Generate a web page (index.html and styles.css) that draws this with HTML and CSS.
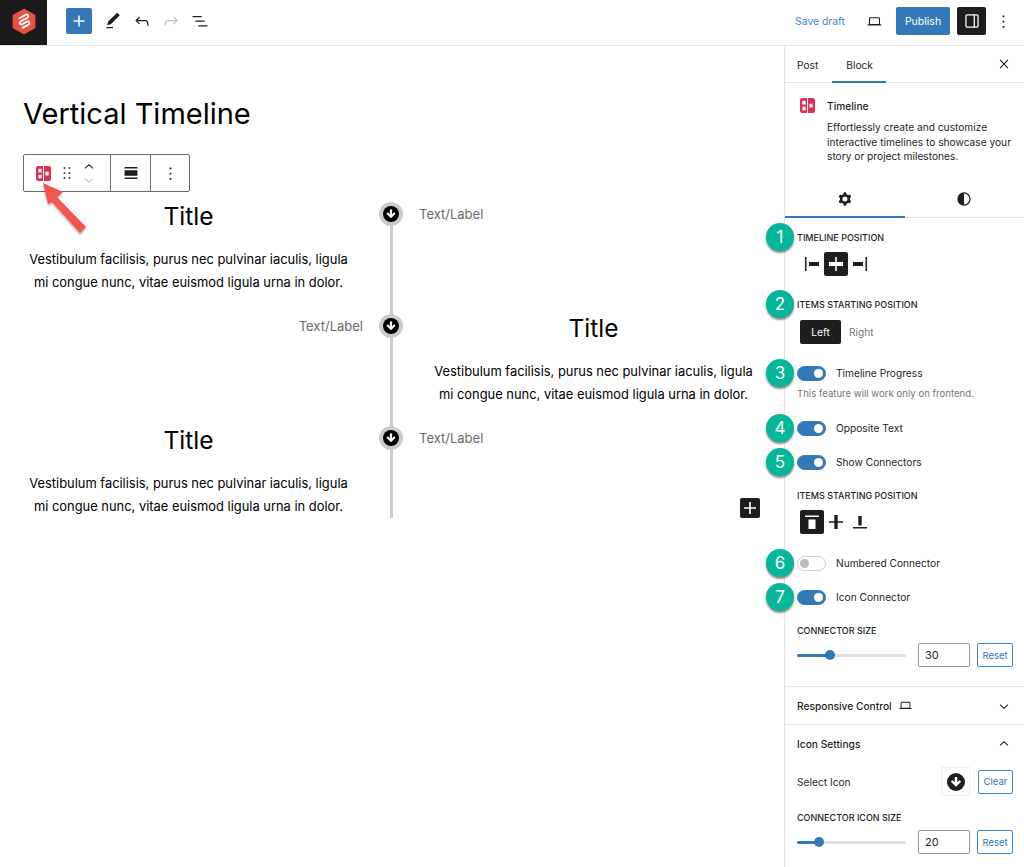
FILE: index.html
```html
<!DOCTYPE html>
<html lang="en">
<head>
  <meta charset="UTF-8">
  <meta name="viewport" content="width=device-width, initial-scale=1.0">
  <title>Vertical Timeline</title>
  <link rel="stylesheet" href="styles.css">
</head>
<body>
  <svg class="sprite" aria-hidden="true">
    <symbol id="i-plus" viewBox="0 0 24 24"><path d="M18 11.2h-5.2V6h-1.6v5.2H6v1.6h5.2V18h1.6v-5.2H18z"/></symbol>
    <symbol id="i-pencil" viewBox="0 0 24 24"><path d="M20.1 5.1L16.9 2 6.2 12.7l-1.3 4.4 4.5-1.3L20.1 5.1zM4 20.8h8v-1.5H4v1.5z"/></symbol>
    <symbol id="i-undo" viewBox="0 0 24 24"><path d="M18.3 11.7c-.6-.6-1.4-.9-2.3-.9H6.7l2.9-3.3-1.1-1-4.5 5L8.5 16l1-1-2.7-2.7H16c.5 0 .9.2 1.3.5 1 1 1 3.4 1 4.5v.3h1.5v-.2c0-1.5 0-4.3-1.5-5.7z"/></symbol>
    <symbol id="i-redo" viewBox="0 0 24 24"><path d="M15.6 6.5l-1.1 1 2.9 3.3H8c-.9 0-1.7.3-2.3.9-1.4 1.5-1.4 4.2-1.4 5.6v.2h1.5v-.3c0-1.1 0-3.5 1-4.5.3-.3.7-.5 1.3-.5h9.2L14.5 15l1.1 1.1 4.6-4.6-4.6-5z"/></symbol>
    <symbol id="i-list" viewBox="0 0 24 24"><path d="M3 6h11v1.5H3V6zm3.5 5.5h11V13h-11v-1.5zM21 17H10v1.5h11V17z"/></symbol>
    <symbol id="i-laptop" viewBox="0 0 24 24"><path d="M20.5 16h-.7V8c0-1.1-.9-2-2-2H6.2c-1.1 0-2 .9-2 2v8h-.7c-.8 0-1.5.7-1.5 1.5h20c0-.8-.7-1.5-1.5-1.5zM5.7 8c0-.3.2-.5.5-.5h11.6c.3 0 .5.2.5.5v7.6H5.7V8z"/></symbol>
    <symbol id="i-sidebar" viewBox="0 0 24 24"><path d="M18 4H6c-1.1 0-2 .9-2 2v12c0 1.1.9 2 2 2h12c1.1 0 2-.9 2-2V6c0-1.1-.9-2-2-2zm-4 14.5H6c-.3 0-.5-.2-.5-.5V6c0-.3.2-.5.5-.5h8v13zm4.5-.5c0 .3-.2.5-.5.5h-2.5v-13H18c.3 0 .5.2.5.5v12z"/></symbol>
    <symbol id="i-more" viewBox="0 0 24 24"><path d="M13 19h-2v-2h2v2zm0-6h-2v-2h2v2zm0-6h-2V5h2v2z"/></symbol>
    <symbol id="i-close" viewBox="0 0 24 24"><path d="M13.300 12l6.100-6.300-1.400-1.300-6 6.200-6-6.200-1.400 1.300 6.100 6.300-6.100 6.300 1.400 1.300 6-6.200 6 6.200 1.400-1.300z"/></symbol>
    <symbol id="i-gear" viewBox="0 0 24 24"><path fill-rule="evenodd" d="M10.289 4.836A1 1 0 0 1 11.275 4h1.306a1 1 0 0 1 .987.836l.244 1.466c.787.26 1.503.679 2.108 1.218l1.393-.522a1 1 0 0 1 1.216.437l.653 1.13a1 1 0 0 1-.23 1.273l-1.148.944a6.025 6.025 0 0 1 0 2.435l1.149.946a1 1 0 0 1 .23 1.272l-.653 1.13a1 1 0 0 1-1.216.437l-1.394-.522c-.605.54-1.32.958-2.108 1.218l-.244 1.466a1 1 0 0 1-.987.836h-1.306a1 1 0 0 1-.986-.836l-.244-1.466a5.995 5.995 0 0 1-2.108-1.218l-1.394.522a1 1 0 0 1-1.217-.436l-.653-1.131a1 1 0 0 1 .23-1.272l1.149-.946a6.026 6.026 0 0 1 0-2.435l-1.148-.944a1 1 0 0 1-.23-1.272l.653-1.131a1 1 0 0 1 1.217-.437l1.393.522a5.994 5.994 0 0 1 2.108-1.218l.244-1.466ZM14.929 12a3 3 0 1 1-6 0 3 3 0 0 1 6 0Z"/></symbol>
    <symbol id="i-contrast" viewBox="0 0 24 24"><path fill-rule="evenodd" d="M12 4a8 8 0 1 0 0 16 8 8 0 0 0 0-16zm0 1.500a6.500 6.500 0 0 1 0 13z"/></symbol>
    <symbol id="i-chev-down" viewBox="0 0 24 24"><path d="M17.500 9.500L12 14.400 6.500 9.500l-1 1.100L12 16.500l6.500-5.900z"/></symbol>
    <symbol id="i-chev-up" viewBox="0 0 24 24"><path d="M6.500 14.500L12 9.600l5.500 4.900 1-1.100L12 7.500l-6.500 5.900z"/></symbol>
    <symbol id="i-drag" viewBox="0 0 24 24"><path d="M8 7h2V5H8v2zm0 6h2v-2H8v2zm0 6h2v-2H8v2zm6-14v2h2V5h-2zm0 8h2v-2h-2v2zm0 6h2v-2h-2v2z"/></symbol>
    <symbol id="i-align" viewBox="0 0 24 24"><path d="M5 5.500h14V7H5zM5 9h14v6H5zM5 17h14v1.500H5z"/></symbol>
    <symbol id="i-pos-left" viewBox="0 0 24 24"><path d="M5 5h1.500v14H5zM9 10h10v4H9z"/></symbol>
    <symbol id="i-pos-center" viewBox="0 0 24 24"><path d="M11.200 5h1.600v5H19v4h-6.200v5h-1.600v-5H5v-4h6.200z"/></symbol>
    <symbol id="i-pos-right" viewBox="0 0 24 24"><path d="M17.500 5H19v14h-1.500zM5 10h10v4H5z"/></symbol>
    <symbol id="i-item-top" viewBox="0 0 24 24"><path d="M5 5.500h14V7H5zM8.500 9.500h7V19h-7z"/></symbol>
    <symbol id="i-item-mid" viewBox="0 0 24 24"><path d="M10.300 5h3.400v6.200H19v1.600h-5.300V19h-3.400v-6.200H5v-1.600h5.300z"/></symbol>
    <symbol id="i-item-bot" viewBox="0 0 24 24"><path d="M10.300 6h3.400v9.500h-3.400zM5 17h14v1.500H5z"/></symbol>
    <symbol id="i-timeline" viewBox="0 0 16 16"><rect width="16" height="16" rx="2.500" fill="#dd2f52"/><path fill="#fff" d="M7.500 0h1v16h-1zM2.500 3h3.500v3.800H2.500zM2.500 9.200h3.500V13H2.500zM10 6h3.500v4H10z"/></symbol>
    <symbol id="i-arrow-circle" viewBox="0 0 20 20"><circle cx="10" cy="10" r="10"/><path fill="#fff" d="M8.600 4.500h2.800v5.700l2.500-2.300 1.800 1.900L10 15.200 4.300 9.800l1.800-1.900 2.500 2.300z"/></symbol>
  </svg>

  <header class="topbar">
    <div class="logo">
      <svg viewBox="0 0 28 30" width="26" height="29">
        <path fill="#e8503f" stroke="#e8503f" stroke-width="1.500" stroke-linejoin="round" d="M14 2l11.500 6.500v13L14 28 2.500 21.500v-13z"/>
        <path fill="none" stroke="#fff" stroke-width="2" stroke-linecap="round" stroke-linejoin="round" d="M9 11.500l7-3.800c2.400-1 3.800 2 1.600 3.300l-7.200 4c-2.200 1.300-.8 4 1.500 3l5.500-3c2.400-1 3.600 2 1.400 3.300l-6.300 3.500"/>
      </svg>
    </div>
    <div class="tools">
      <button class="btn-add"><svg class="ico"><use href="#i-plus"/></svg></button>
      <svg class="ico"><use href="#i-pencil"/></svg>
      <svg class="ico"><use href="#i-undo"/></svg>
      <svg class="ico is-disabled"><use href="#i-redo"/></svg>
      <svg class="ico"><use href="#i-list"/></svg>
    </div>
    <div class="actions">
      <span class="save-draft">Save draft</span>
      <svg class="ico laptop"><use href="#i-laptop"/></svg>
      <button class="btn-publish">Publish</button>
      <button class="btn-sidebar"><svg class="ico"><use href="#i-sidebar"/></svg></button>
      <svg class="ico more"><use href="#i-more"/></svg>
    </div>
  </header>

  <div class="workspace">
    <main class="editor">
      <h1 class="post-title">Vertical Timeline</h1>

      <div class="block-toolbar">
        <div class="tb-group tb-main">
          <svg class="tb-block"><use href="#i-timeline"/></svg>
          <svg class="ico tb-drag"><use href="#i-drag"/></svg>
          <div class="tb-mover">
            <svg class="ico"><use href="#i-chev-up"/></svg>
            <svg class="ico is-disabled"><use href="#i-chev-down"/></svg>
          </div>
        </div>
        <div class="tb-group tb-align"><svg class="ico"><use href="#i-align"/></svg></div>
        <div class="tb-group tb-more"><svg class="ico"><use href="#i-more"/></svg></div>
      </div>

      <svg class="pointer" width="56" height="62" viewBox="0 0 56 62">
        <path fill="#f6544f" d="M5 5l20 9-6 5 29 30-6 6-28-31-4 2z"/>
      </svg>

      <div class="timeline">
        <div class="tl-row">
          <div class="tl-cell tl-content is-left">
            <h2>Title</h2>
            <p>Vestibulum facilisis, purus nec pulvinar iaculis, ligula mi congue nunc, vitae euismod ligula urna in dolor.</p>
          </div>
          <div class="tl-axis"><span class="tl-dot"><svg><use href="#i-arrow-circle"/></svg></span></div>
          <div class="tl-cell tl-label">Text/Label</div>
        </div>
        <div class="tl-row">
          <div class="tl-cell tl-label is-end">Text/Label</div>
          <div class="tl-axis"><span class="tl-dot"><svg><use href="#i-arrow-circle"/></svg></span></div>
          <div class="tl-cell tl-content is-right">
            <h2>Title</h2>
            <p>Vestibulum facilisis, purus nec pulvinar iaculis, ligula mi congue nunc, vitae euismod ligula urna in dolor.</p>
          </div>
        </div>
        <div class="tl-row is-last">
          <div class="tl-cell tl-content is-left">
            <h2>Title</h2>
            <p>Vestibulum facilisis, purus nec pulvinar iaculis, ligula mi congue nunc, vitae euismod ligula urna in dolor.</p>
          </div>
          <div class="tl-axis"><span class="tl-dot"><svg><use href="#i-arrow-circle"/></svg></span></div>
          <div class="tl-cell tl-label">Text/Label</div>
          <button class="btn-append"><svg class="ico"><use href="#i-plus"/></svg></button>
        </div>
      </div>
    </main>

    <aside class="sidebar">
      <div class="side-tabs">
        <span class="side-tab">Post</span>
        <span class="side-tab is-active">Block</span>
        <svg class="ico side-close"><use href="#i-close"/></svg>
      </div>

      <div class="block-card">
        <svg class="card-icon"><use href="#i-timeline"/></svg>
        <div>
          <div class="card-title">Timeline</div>
          <p class="card-desc">Effortlessly create and customize interactive timelines to showcase your story or project milestones.</p>
        </div>
      </div>

      <div class="style-tabs">
        <div class="style-tab is-active"><svg class="ico"><use href="#i-gear"/></svg></div>
        <div class="style-tab"><svg class="ico"><use href="#i-contrast"/></svg></div>
      </div>

      <section class="panel">
        <div class="ctl-label with-badge"><span class="badge">1</span>Timeline Position</div>
        <div class="icon-group mt-8">
          <span class="icon-opt"><svg class="ico"><use href="#i-pos-left"/></svg></span>
          <span class="icon-opt is-on"><svg class="ico"><use href="#i-pos-center"/></svg></span>
          <span class="icon-opt"><svg class="ico"><use href="#i-pos-right"/></svg></span>
        </div>

        <div class="ctl-label with-badge mt-21"><span class="badge">2</span>Items Starting Position</div>
        <div class="segmented mt-9">
          <span class="seg is-on">Left</span>
          <span class="seg">Right</span>
        </div>

        <label class="toggle-row mt-19"><span class="badge">3</span><span class="toggle is-on"></span>Timeline Progress</label>
        <p class="help mt-4">This feature will work only on frontend.</p>

        <label class="toggle-row mt-17"><span class="badge">4</span><span class="toggle is-on"></span>Opposite Text</label>
        <label class="toggle-row mt-14"><span class="badge">5</span><span class="toggle is-on"></span>Show Connectors</label>

        <div class="ctl-label mt-16">Items Starting Position</div>
        <div class="icon-group mt-8">
          <span class="icon-opt is-on"><svg class="ico"><use href="#i-item-top"/></svg></span>
          <span class="icon-opt"><svg class="ico"><use href="#i-item-mid"/></svg></span>
          <span class="icon-opt"><svg class="ico"><use href="#i-item-bot"/></svg></span>
        </div>

        <label class="toggle-row mt-19"><span class="badge">6</span><span class="toggle"></span>Numbered Connector</label>
        <label class="toggle-row mt-14"><span class="badge">7</span><span class="toggle is-on"></span>Icon Connector</label>

        <div class="ctl-label mt-16">Connector Size</div>
        <div class="range-row mt-6">
          <div class="range"><div class="range-fill" style="width: 30%"></div></div>
          <span class="num-input">30</span>
          <button class="btn-outline btn-reset">Reset</button>
        </div>
      </section>

      <section class="accordion">
        <span>Responsive Control</span>
        <svg class="ico acc-device"><use href="#i-laptop"/></svg>
        <svg class="ico acc-chev"><use href="#i-chev-down"/></svg>
      </section>

      <section class="accordion is-open">
        <span>Icon Settings</span>
        <svg class="ico acc-chev"><use href="#i-chev-up"/></svg>
      </section>
      <div class="panel panel-open">
        <div class="select-icon">
          <span class="select-label">Select Icon</span>
          <span class="icon-preview"><svg><use href="#i-arrow-circle"/></svg></span>
          <button class="btn-outline btn-clear">Clear</button>
        </div>
        <div class="ctl-label mt-14">Connector Icon Size</div>
        <div class="range-row mt-6">
          <div class="range"><div class="range-fill" style="width: 20%"></div></div>
          <span class="num-input">20</span>
          <button class="btn-outline btn-reset">Reset</button>
        </div>
      </div>
    </aside>
  </div>
</body>
</html>
```

FILE: styles.css
```css
* {
  box-sizing: border-box;
}

html,
body {
  height: 100%;
}

body {
  margin: 0;
  overflow: hidden;
  background-color: #fff;
  color: #1e1e1e;
  font-family: 'Inter', 'Liberation Sans', sans-serif;
  font-size: 10.200px;
}

button {
  border: none;
  padding: 0;
  font: inherit;
}

svg {
  display: block;
  fill: currentColor;
}

.sprite {
  display: none;
}

.ico {
  width: 24px;
  height: 24px;
  flex: none;
}

.is-disabled {
  color: #c4c4c4;
}

/* top bar */
.topbar {
  display: flex;
  align-items: center;
  height: 46px;
  padding-right: 8px;
  border-bottom: 1px solid #e4e4e4;
}

.logo {
  display: flex;
  align-items: center;
  justify-content: center;
  width: 47px;
  height: 45px;
  margin-right: 19px;
  padding-bottom: 3px;
  background-color: #1a1a1a;
}

.tools {
  display: flex;
  align-items: center;
  gap: 9px;
  padding-bottom: 3px;
}

.tools > .ico {
  width: 20px;
  height: 20px;
}

.btn-add {
  display: flex;
  align-items: center;
  justify-content: center;
  width: 26px;
  height: 26px;
  margin-right: 2px;
  border-radius: 2px;
  background-color: #3379b7;
  color: #fff;
}

.btn-add .ico {
  width: 22px;
  height: 22px;
}

.actions {
  display: flex;
  align-items: center;
  margin-left: auto;
  padding-bottom: 3px;
}

.save-draft {
  margin-right: 21px;
  color: #3f86c6;
  font-size: 10.400px;
}

.laptop {
  width: 17px;
  height: 17px;
  margin-right: 13px;
}

.btn-publish {
  width: 54px;
  height: 28px;
  margin-right: 7px;
  border-radius: 2px;
  background-color: #3379b7;
  color: #fff;
  font-size: 10.500px;
}

.btn-sidebar {
  display: flex;
  align-items: center;
  justify-content: center;
  width: 29px;
  height: 28px;
  border-radius: 2px;
  background-color: #1e1e1e;
  color: #fff;
}

.btn-sidebar .ico {
  width: 20px;
  height: 20px;
}

.more {
  width: 21px;
  height: 21px;
  margin: 0 2px 0 7px;
}

/* layout */
.workspace {
  display: flex;
  height: calc(100vh - 46px);
}

/* editor */
.editor {
  position: relative;
  width: 784px;
  flex: none;
  padding: 50px 24px 0 23px;
  color: #000;
}

.post-title {
  margin: 0;
  font-size: 29px;
  font-weight: 400;
  line-height: 36px;
}

.block-toolbar {
  display: inline-flex;
  height: 38px;
  margin-top: 22px;
  border: 1px solid #6b6b6b;
  border-radius: 2px;
  vertical-align: top;
  color: #1e1e1e;
}

.tb-group {
  display: flex;
  align-items: center;
  justify-content: center;
  border-right: 1px solid #6b6b6b;
}

.tb-group:last-child {
  border-right: none;
}

.tb-main {
  width: 87px;
  padding-left: 12px;
  justify-content: flex-start;
}

.tb-align {
  width: 40px;
}

.tb-align .ico {
  width: 22px;
  height: 22px;
}

.tb-more {
  width: 38px;
}

.tb-more .ico {
  width: 21px;
  height: 21px;
}

.tb-block {
  width: 15px;
  height: 15px;
  flex: none;
}

.tb-drag {
  width: 20px;
  height: 20px;
  margin-left: 6px;
}

.tb-mover {
  margin-left: 3px;
  display: flex;
  flex-direction: column;
}

.tb-mover .ico {
  width: 18px;
  height: 16px;
}

.tb-mover .ico:last-child {
  margin-top: -3px;
}

.pointer {
  position: absolute;
  left: 38px;
  top: 132px;
  z-index: 2;
  filter: drop-shadow(0 2px 1px rgba(0, 0, 0, 0.3));
}

/* timeline block */
.timeline {
  margin-top: 10px;
}

.tl-row {
  position: relative;
  display: grid;
  grid-template-columns: 340px 56px 1fr;
  height: 112px;
}

.tl-row.is-last {
  height: 92px;
}

.tl-content {
  text-align: center;
}

.tl-content.is-left {
  padding-right: 9px;
}

.tl-content.is-right {
  padding-left: 8px;
}

.tl-content h2 {
  margin: 0;
  font-size: 24.500px;
  font-weight: 400;
  line-height: 28px;
}

.tl-content p {
  margin: 18px 0 0;
  font-size: 12.900px;
  line-height: 23px;
}

.tl-label {
  color: #6a6a6a;
  font-size: 13px;
  line-height: 24px;
}

.tl-label.is-end {
  text-align: right;
}

.tl-axis {
  display: flex;
  justify-content: center;
  background: linear-gradient(#ccc, #ccc) center / 3px 100% no-repeat;
}

.tl-dot {
  display: flex;
  align-items: center;
  justify-content: center;
  width: 24px;
  height: 24px;
  border-radius: 50%;
  background-color: #ccc;
  color: #000;
}

.tl-dot svg {
  width: 16px;
  height: 16px;
}

.btn-append {
  position: absolute;
  right: 0;
  bottom: 0;
  display: flex;
  align-items: center;
  justify-content: center;
  width: 20px;
  height: 20px;
  border-radius: 2px;
  background-color: #1e1e1e;
  color: #fff;
}

/* sidebar */
.sidebar {
  position: relative;
  z-index: 3;
  width: 240px;
  flex: none;
  border-left: 1px solid #e4e4e4;
  background-color: #fff;
}

.side-tabs {
  display: flex;
  align-items: center;
  height: 37px;
  border-bottom: 1px solid #e4e4e4;
}

.side-tab {
  display: flex;
  align-items: center;
  height: 37px;
  padding: 0 14px 0 12px;
  margin-top: 1px;
}

.side-tab.is-active {
  width: 54px;
  padding: 0 14px;
  box-shadow: inset 0 -2px 0 #3379b7;
}

.side-close {
  width: 14px;
  height: 14px;
  margin-left: auto;
  margin-right: 13px;
}

.block-card {
  display: flex;
  gap: 12px;
  padding: 15px 10px 0 15px;
  height: 101px;
}

.card-icon {
  width: 15px;
  height: 15px;
  flex: none;
}

.card-title {
  padding-top: 1px;
  font-weight: 500;
  line-height: 15px;
}

.card-desc {
  margin: 6px 0 0;
  line-height: 14.600px;
}

.style-tabs {
  display: flex;
  height: 34px;
  border-bottom: 1px solid #e4e4e4;
}

.style-tab {
  display: flex;
  align-items: center;
  justify-content: center;
  width: 121px;
  padding-bottom: 5px;
  margin-bottom: -1px;
}

.style-tab .ico {
  width: 20px;
  height: 20px;
}

.style-tab.is-active {
  box-shadow: inset 0 -2px 0 #3379b7;
}

.panel {
  padding: 12px 11px 19px 12px;
  border-bottom: 1px solid #e8e8e8;
}

.panel-open {
  padding-top: 4px;
  border-bottom: none;
}

.mt-4 { margin-top: 4px; }
.mt-6 { margin-top: 6px; }
.mt-8 { margin-top: 8px; }
.mt-9 { margin-top: 9px; }
.mt-14 { margin-top: 14px; }
.mt-16 { margin-top: 16px; }
.mt-17 { margin-top: 17px; }
.mt-19 { margin-top: 19px; }
.mt-21 { margin-top: 21px; }

.ctl-label {
  height: 14px;
  padding-top: 1px;
  font-size: 9px;
  font-weight: 500;
  line-height: 14px;
  text-transform: uppercase;
}

.with-badge,
.toggle-row {
  position: relative;
}

.badge {
  position: absolute;
  left: -31px;
  top: 50%;
  width: 28px;
  height: 28px;
  margin-top: -14px;
  border-radius: 50%;
  background-color: #04b79b;
  box-shadow: 0 2px 2px rgba(0, 0, 0, 0.45);
  color: #fff;
  font-size: 17px;
  font-weight: 400;
  line-height: 28px;
  text-align: center;
  text-transform: none;
}

.icon-group {
  display: flex;
  padding-left: 3px;
}

.icon-opt {
  display: block;
  width: 24px;
  height: 24px;
  border-radius: 2px;
}

.icon-opt.is-on {
  background-color: #1e1e1e;
  color: #fff;
}

.segmented {
  display: flex;
  align-items: center;
  padding-left: 3px;
}

.seg {
  display: flex;
  align-items: center;
  justify-content: center;
  width: 41px;
  height: 24px;
  margin-right: 8px;
  color: #757575;
}

.seg.is-on {
  border-radius: 2px;
  background-color: #1e1e1e;
  color: #fff;
}

.seg:last-child {
  width: auto;
}

.toggle-row {
  display: flex;
  align-items: center;
  height: 20px;
}

.toggle {
  position: relative;
  width: 29px;
  height: 15px;
  margin-right: 10px;
  border: 1px solid #ccc;
  border-radius: 8px;
  background-color: #fff;
}

.toggle::after {
  content: "";
  position: absolute;
  left: 2px;
  top: 2px;
  width: 9px;
  height: 9px;
  border-radius: 50%;
  background-color: #bbb;
}

.toggle.is-on {
  border-color: #3379b7;
  background-color: #3379b7;
}

.toggle.is-on::after {
  left: auto;
  right: 2px;
  background-color: #fff;
}

.help {
  margin-bottom: 0;
  color: #757575;
  font-size: 9.600px;
  line-height: 14px;
}

.range-row {
  display: flex;
  align-items: center;
}

.range {
  width: 109px;
  height: 3px;
  margin-right: 12px;
  border-radius: 2px;
  background-color: #e0e0e0;
}

.range-fill {
  position: relative;
  height: 3px;
  border-radius: 2px;
  background-color: #3379b7;
}

.range-fill::after {
  content: "";
  position: absolute;
  right: -5px;
  top: -3.500px;
  width: 10px;
  height: 10px;
  border-radius: 50%;
  background-color: #3379b7;
}

.num-input {
  width: 52px;
  height: 24px;
  margin-right: 7px;
  padding-left: 6px;
  border: 1px solid #949494;
  border-radius: 2px;
  font-size: 11px;
  line-height: 22px;
}

.btn-outline {
  border: 1px solid #3f86c6;
  border-radius: 2px;
  background-color: #fff;
  color: #3379b7;
  font-size: 9.500px;
}

.btn-reset {
  width: 36px;
  height: 24px;
}

.accordion {
  display: flex;
  align-items: center;
  height: 38px;
  padding: 0 12px 0 12px;
  border-bottom: 1px solid #e8e8e8;
  font-weight: 500;
}

.accordion.is-open {
  border-bottom: none;
}

.acc-device {
  width: 15px;
  height: 15px;
  margin-left: 6px;
}

.acc-chev {
  width: 16px;
  height: 16px;
  margin-left: auto;
}

.select-icon {
  display: flex;
  align-items: center;
  height: 29px;
}

.select-label {
  margin-right: auto;
}

.icon-preview {
  display: flex;
  align-items: center;
  justify-content: center;
  width: 29px;
  height: 29px;
  margin-right: 8px;
  border: 1px solid #f0f0f0;
}

.icon-preview svg {
  width: 18px;
  height: 18px;
}

.btn-clear {
  width: 35px;
  height: 24px;
}
```
